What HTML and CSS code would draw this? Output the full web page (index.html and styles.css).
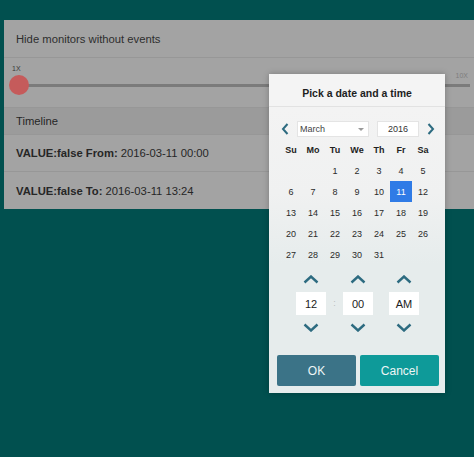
FILE: index.html
```html
<!DOCTYPE html>
<html>
<head>
<meta charset="utf-8">
<link rel="stylesheet" href="styles.css">
</head>
<body>
<div class="page">
  <div class="panel">
    <div class="row row-hide">Hide monitors without events</div>
    <div class="row row-slider">
      <div class="slider-labels"><span>1X</span><span>10X</span></div>
      <div class="track"><div class="thumb"></div></div>
    </div>
    <div class="row row-timeline">Timeline</div>
    <div class="row row-value"><b>VALUE:false From:</b>&nbsp;2016-03-11 00:00</div>
    <div class="row row-value last"><b>VALUE:false To:</b>&nbsp;2016-03-11 13:24</div>
  </div>
</div>

<div class="modal">
  <div class="modal-head">Pick a date and a time</div>
  <div class="modal-body">
    <div class="nav">
      <svg class="arrow" width="8" height="12" viewBox="0 0 8 12"><path d="M6.5 1 L2 6 L6.5 11" fill="none" stroke="#2d6b80" stroke-width="2"/></svg>
      <div class="select"><span>March</span><span class="caret"></span></div>
      <div class="year">2016</div>
      <svg class="arrow" width="8" height="12" viewBox="0 0 8 12"><path d="M1.5 1 L6 6 L1.5 11" fill="none" stroke="#2d6b80" stroke-width="2"/></svg>
    </div>
    <div class="cal">
      <div class="dh">Su</div><div class="dh">Mo</div><div class="dh">Tu</div><div class="dh">We</div><div class="dh">Th</div><div class="dh">Fr</div><div class="dh">Sa</div>
      <div></div><div></div><div>1</div><div>2</div><div>3</div><div>4</div><div>5</div>
      <div>6</div><div>7</div><div>8</div><div>9</div><div>10</div><div class="sel">11</div><div>12</div>
      <div>13</div><div>14</div><div>15</div><div>16</div><div>17</div><div>18</div><div>19</div>
      <div>20</div><div>21</div><div>22</div><div>23</div><div>24</div><div>25</div><div>26</div>
      <div>27</div><div>28</div><div>29</div><div>30</div><div>31</div><div></div><div></div>
    </div>
    <div class="time">
      <div class="tcol">
        <svg class="chev" width="16" height="9" viewBox="0 0 16 9"><path d="M1.5 7.5 L8 1.5 L14.5 7.5" fill="none" stroke="#2d6b80" stroke-width="2.4"/></svg>
        <div class="tbox">12</div>
        <svg class="chev" width="16" height="9" viewBox="0 0 16 9"><path d="M1.5 1.5 L8 7.5 L14.5 1.5" fill="none" stroke="#2d6b80" stroke-width="2.4"/></svg>
      </div>
      <div class="colon">:</div>
      <div class="tcol">
        <svg class="chev" width="16" height="9" viewBox="0 0 16 9"><path d="M1.5 7.5 L8 1.5 L14.5 7.5" fill="none" stroke="#2d6b80" stroke-width="2.4"/></svg>
        <div class="tbox">00</div>
        <svg class="chev" width="16" height="9" viewBox="0 0 16 9"><path d="M1.5 1.5 L8 7.5 L14.5 1.5" fill="none" stroke="#2d6b80" stroke-width="2.4"/></svg>
      </div>
      <div class="spacer"></div>
      <div class="tcol">
        <svg class="chev" width="16" height="9" viewBox="0 0 16 9"><path d="M1.5 7.5 L8 1.5 L14.5 7.5" fill="none" stroke="#2d6b80" stroke-width="2.4"/></svg>
        <div class="tbox">AM</div>
        <svg class="chev" width="16" height="9" viewBox="0 0 16 9"><path d="M1.5 1.5 L8 7.5 L14.5 1.5" fill="none" stroke="#2d6b80" stroke-width="2.4"/></svg>
      </div>
    </div>
    <div class="buttons">
      <div class="btn ok">OK</div>
      <div class="btn cancel">Cancel</div>
    </div>
  </div>
</div>
</body>
</html>
```
FILE: styles.css
```css
html, body {
  margin: 0;
  padding: 0;
}
body {
  background: #01504f;
  font-family: "Liberation Sans", Arial, sans-serif;
  color: #262626;
  width: 474px;
  height: 457px;
  overflow: hidden;
  position: relative;
}
.page {
  padding: 20px 0 0 4px;
}
.panel {
  background: #a3a3a3;
  width: 470px;
}
.row {
  box-sizing: border-box;
  padding-left: 12px;
  font-size: 11.25px;
  display: flex;
  align-items: center;
  border-bottom: 1px solid #979797;
}
.row-hide {
  height: 38px;
  color: #2e2e2e;
}
.row-slider {
  height: 50px;
  display: block;
  padding: 0 4px 0 6px;
  position: relative;
}
.slider-labels {
  display: flex;
  justify-content: space-between;
  font-size: 7px;
  color: #3a3a3a;
  padding: 7px 0 0 2px;
  height: 12px;
}
.slider-labels span:last-child {
  color: #7e7e7e;
  padding-top: 7px;
  padding-right: 2px;
}
.track {
  margin-top: 7px;
  height: 3px;
  background: #7b7b7b;
  position: relative;
}
.thumb {
  position: absolute;
  left: -1px;
  top: -9px;
  width: 20px;
  height: 20px;
  border-radius: 50%;
  background: #c55b5b;
}
.row-timeline {
  height: 27px;
  background: #9b9b9b;
}
.row-value {
  height: 37px;
}
.row-value b {
  font-weight: bold;
}
.row-value.last {
  border-bottom: none;
}

.modal {
  position: absolute;
  left: 269px;
  top: 74px;
  width: 176px;
  height: 319px;
  box-shadow: 0 0 6px rgba(0,0,0,0.25);
  display: flex;
  flex-direction: column;
}
.modal-head {
  height: 33px;
  box-sizing: border-box;
  padding-top: 13px;
  text-align: center;
  font-weight: bold;
  font-size: 10.5px;
  color: #1e1e1e;
  background: #f4f4f4;
  border-bottom: 1px solid #e2e2e2;
}
.modal-body {
  flex: 1;
  background: linear-gradient(#f3f3f3 0%, #f0f1f1 30%, #e6ecec 55%, #e6ecec 100%);
  display: flex;
  flex-direction: column;
  padding: 0 6px 7px 8px;
}
.nav {
  display: flex;
  align-items: center;
  height: 16px;
  margin-top: 14px;
  padding-left: 4px;
}
.arrow {
  display: block;
}
.select {
  margin-left: 8px;
  width: 72px;
  height: 16px;
  box-sizing: border-box;
  background: #fff;
  border: 1px solid #e4e4e4;
  font-size: 9px;
  color: #444;
  display: flex;
  align-items: center;
  justify-content: space-between;
  padding: 0 4px 0 2px;
}
.caret {
  width: 0;
  height: 0;
  border-left: 3px solid transparent;
  border-right: 3px solid transparent;
  border-top: 3px solid #9a9a9a;
}
.year {
  margin-left: 8px;
  margin-right: 8px;
  width: 42px;
  height: 16px;
  box-sizing: border-box;
  background: #fff;
  border: 1px solid #e4e4e4;
  font-size: 9px;
  color: #333;
  display: flex;
  align-items: center;
  justify-content: center;
}
.cal {
  display: grid;
  grid-template-columns: repeat(7, 22px);
  grid-auto-rows: 21px;
  margin: 2px 0 0 3px;
  font-size: 9px;
  color: #2a2a2a;
}
.cal div {
  display: flex;
  align-items: center;
  justify-content: center;
}
.cal .dh {
  font-weight: bold;
  color: #222;
}
.cal .sel {
  background: #2f7be6;
  color: #fff;
}
.time {
  display: flex;
  align-items: center;
  margin-top: 10px;
  padding-left: 19px;
}
.tcol {
  display: flex;
  flex-direction: column;
  align-items: center;
  width: 30px;
}
.chev {
  display: block;
}
.tbox {
  width: 30px;
  height: 23px;
  background: #fff;
  margin: 8px 0 8px;
  display: flex;
  align-items: center;
  justify-content: center;
  font-size: 11px;
  color: #222;
}
.colon {
  width: 17px;
  text-align: center;
  font-size: 9px;
  color: #b8bcbc;
  padding-bottom: 2px;
}
.spacer {
  width: 16px;
}
.buttons {
  margin-top: auto;
  display: flex;
  gap: 4px;
}
.btn {
  width: 79px;
  height: 31px;
  display: flex;
  align-items: center;
  justify-content: center;
  font-size: 12px;
  color: #eef6f6;
  border-radius: 2px;
}
.ok {
  background: #3b7387;
}
.cancel {
  background: #0e9a99;
}
```
